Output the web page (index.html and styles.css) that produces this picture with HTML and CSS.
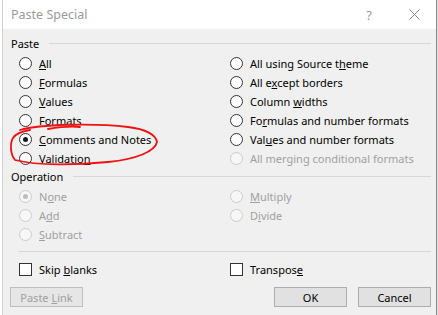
FILE: index.html
```html
<!DOCTYPE html>
<html>
<head>
    <meta charset="UTF-8">
    <meta name="viewport" content="width=device-width, initial-scale=1.0">
    <title>Paste Special</title>
    <link rel="stylesheet" href="styles.css">
</head>
<body>
    <div class="dialog">
        <div class="titlebar">
            <span class="title">Paste Special</span>
            <span class="help">?</span>
            <svg class="close" width="11" height="11" viewBox="0 0 11 11">
                <path d="M0.5 0.5 L10.5 10.5 M10.5 0.5 L0.5 10.5" stroke="#8a8a8a" stroke-width="1" fill="none"/>
            </svg>
        </div>

        <div class="content">
            <div class="group-head"><span>Paste</span><div class="rule"></div></div>
            <div class="options">
                <label class="radio"><span class="circle"></span><span><u>A</u>ll</span></label>
                <label class="radio"><span class="circle"></span><span>All using Source t<u>h</u>eme</span></label>
                <label class="radio"><span class="circle"></span><span><u>F</u>ormulas</span></label>
                <label class="radio"><span class="circle"></span><span>All e<u>x</u>cept borders</span></label>
                <label class="radio"><span class="circle"></span><span><u>V</u>alues</span></label>
                <label class="radio"><span class="circle"></span><span>Column <u>w</u>idths</span></label>
                <label class="radio"><span class="circle"></span><span>Forma<u>t</u>s</span></label>
                <label class="radio"><span class="circle"></span><span>Fo<u>r</u>mulas and number formats</span></label>
                <label class="radio"><span class="circle checked"></span><span><u>C</u>omments and Notes</span></label>
                <label class="radio"><span class="circle"></span><span>Val<u>u</u>es and number formats</span></label>
                <label class="radio"><span class="circle"></span><span>Validatio<u>n</u></span></label>
                <label class="radio disabled"><span class="circle"></span><span>All merging conditional formats</span></label>
            </div>

            <div class="group-head"><span>Operation</span><div class="rule"></div></div>
            <div class="options">
                <label class="radio disabled"><span class="circle checked"></span><span>N<u>o</u>ne</span></label>
                <label class="radio disabled"><span class="circle"></span><span><u>M</u>ultiply</span></label>
                <label class="radio disabled"><span class="circle"></span><span>A<u>d</u>d</span></label>
                <label class="radio disabled"><span class="circle"></span><span>D<u>i</u>vide</span></label>
                <label class="radio disabled"><span class="circle"></span><span><u>S</u>ubtract</span></label>
            </div>

            <div class="separator"></div>

            <div class="checks">
                <label class="check"><span class="box"></span><span>Skip <u>b</u>lanks</span></label>
                <label class="check"><span class="box"></span><span>Transpos<u>e</u></span></label>
            </div>

            <div class="buttons">
                <button class="btn" disabled>Paste <u>L</u>ink</button>
                <button class="btn ok">OK</button>
                <button class="btn">Cancel</button>
            </div>
        </div>
    </div>

    <!-- red pen mark drawn over the dialog -->
    <svg class="scribble" width="438" height="315" viewBox="0 0 438 315">
        <path d="M48 129 C60 127 70 126 80 127
                 M20 130 C40 124 95 123 128 127 C146 129 156 135 157 142
                 C155 151 138 159 108 162 C78 165 38 166 15 160
                 C10 154 10 143 13 138 C16 133 24 131 30 130"
              stroke="#ee1111" stroke-width="1.8" fill="none" stroke-linecap="round"/>
    </svg>
</body>
</html>
```

FILE: styles.css
```css
body {
    margin: 0;
    background-color: #ffffff;
    font-family: "Noto Sans", "Open Sans", sans-serif;
    font-size: 11px;
    color: #000000;
}

.dialog {
    width: 435px;
    height: 315px;
    margin-left: 2px;
    box-sizing: border-box;
    border-left: 1px solid #d0d0d0;
    border-right: 1px solid #8a8a8a;
    box-shadow: 1px 0 0 #dedede;
    background-color: #f0f0f0;
}

.titlebar {
    height: 29px;
    display: flex;
    align-items: center;
    background-color: #ffffff;
}

.title {
    margin-left: 8px;
    font-size: 12.5px;
    color: #9a9a9a;
}

.help {
    margin-left: auto;
    font-size: 13px;
    color: #9a9a9a;
}

.close {
    margin-left: 37px;
    margin-right: 16px;
}

.content {
    padding: 6px 5px 0 8px;
}

.group-head {
    display: flex;
    align-items: center;
    height: 16px;
}

.rule {
    flex: 1;
    height: 1px;
    margin-left: 10px;
    background-color: #d8d8d8;
}

.options {
    display: grid;
    grid-template-columns: 211px 1fr;
    grid-auto-rows: 19px;
    margin: 3px 0 0 8px;
}

.radio,
.check {
    display: flex;
    align-items: center;
    gap: 7px;
    white-space: nowrap;
}

.circle {
    width: 13px;
    height: 13px;
    box-sizing: border-box;
    border: 1px solid #333333;
    border-radius: 50%;
    background-color: #ffffff;
    display: grid;
    place-items: center;
    flex: none;
}

.circle.checked::after {
    content: "";
    width: 5px;
    height: 5px;
    border-radius: 50%;
    background-color: #1a1a1a;
}

.disabled {
    color: #a0a0a0;
}

.disabled .circle {
    border-color: #cccccc;
    background-color: #f7f7f7;
}

.disabled .circle.checked::after {
    background-color: #bdbdbd;
}

.separator {
    height: 1px;
    margin: 7px 0 0 7px;
    background-color: #d8d8d8;
}

.checks {
    display: grid;
    grid-template-columns: 211px 1fr;
    grid-auto-rows: 18px;
    margin: 8px 0 0 8px;
}

.box {
    width: 13px;
    height: 13px;
    box-sizing: border-box;
    border: 1px solid #333333;
    background-color: #ffffff;
    flex: none;
}

.buttons {
    display: flex;
    margin: 9px 0 0 -1px;
    gap: 11px;
}

.btn {
    width: 73px;
    height: 20px;
    padding: 0;
    box-sizing: border-box;
    border: 1px solid #adadad;
    background-color: #e1e1e1;
    font-family: inherit;
    font-size: 11px;
    color: #000000;
}

.btn:disabled {
    border-color: #bfbfbf;
    background-color: #e6e6e6;
    color: #a0a0a0;
}

.ok {
    margin-left: auto;
}

.scribble {
    position: absolute;
    top: 0;
    left: 0;
    pointer-events: none;
}
```
